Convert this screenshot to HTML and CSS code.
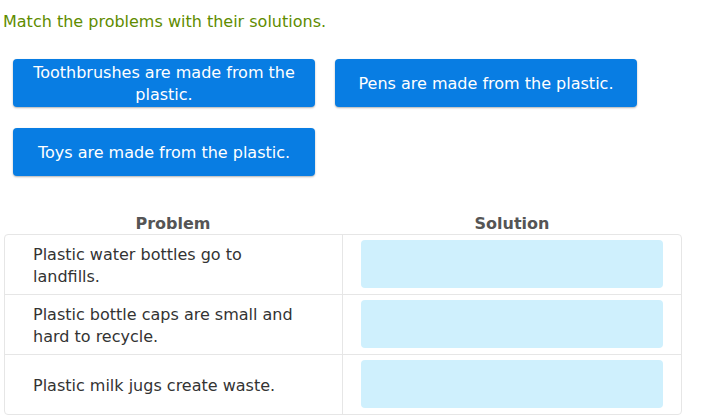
FILE: index.html
```html
<!DOCTYPE html>
<html>
<head>
<meta charset="utf-8">
<link rel="stylesheet" href="styles.css">
</head>
<body>
<div class="page">
  <p class="title">Match the problems with their solutions.</p>
  <div class="tiles">
    <div class="tile">Toothbrushes are made from the plastic.</div>
    <div class="tile">Pens are made from the plastic.</div>
    <div class="tile">Toys are made from the plastic.</div>
  </div>
  <div class="board">
    <div class="heads">
      <div class="head">Problem</div>
      <div class="head">Solution</div>
    </div>
    <div class="table">
      <div class="row">
        <div class="problem">Plastic water bottles go to landfills.</div>
        <div class="solution"><div class="drop"></div></div>
      </div>
      <div class="row">
        <div class="problem">Plastic bottle caps are small and hard to recycle.</div>
        <div class="solution"><div class="drop"></div></div>
      </div>
      <div class="row">
        <div class="problem">Plastic milk jugs create waste.</div>
        <div class="solution"><div class="drop"></div></div>
      </div>
    </div>
  </div>
</div>
</body>
</html>
```
FILE: styles.css
```css
html, body {
  margin: 0;
  padding: 0;
  background: #ffffff;
}
body {
  font-family: "DejaVu Sans", Verdana, sans-serif;
  font-size: 16px;
  line-height: 22px;
  color: #333333;
}
.page {
  padding-top: 11px;
}
.title {
  margin: 0 0 0 3px;
  color: #5f8c00;
}
.tiles {
  display: grid;
  grid-template-columns: 302px 302px;
  column-gap: 20px;
  row-gap: 21px;
  margin: 26px 0 0 13px;
}
.tile {
  box-sizing: border-box;
  min-height: 48px;
  padding: 2px 16px 0;
  display: flex;
  align-items: center;
  justify-content: center;
  text-align: center;
  background: #087de3;
  color: #ffffff;
  border-radius: 4px;
  box-shadow: 0 1px 2px rgba(0, 0, 0, 0.3);
}
.board {
  margin: 36px 0 0 4px;
  width: 678px;
}
.heads {
  display: grid;
  grid-template-columns: 338px 340px;
}
.head {
  text-align: center;
  font-weight: bold;
  color: #555555;
  padding-top: 2px;
  line-height: 20px;
}
.table {
  border: 1px solid #e6e6e6;
  border-radius: 4px;
}
.row {
  display: grid;
  grid-template-columns: 337px 1fr;
}
.row + .row {
  border-top: 1px solid #e6e6e6;
}
.problem {
  padding: 2px 40px 0 28px;
  display: flex;
  align-items: center;
}
.solution {
  border-left: 1px solid #e6e6e6;
  padding: 5px 0 6px 18px;
}
.drop {
  width: 302px;
  height: 48px;
  background: #cff0fd;
  border-radius: 4px;
}
```
